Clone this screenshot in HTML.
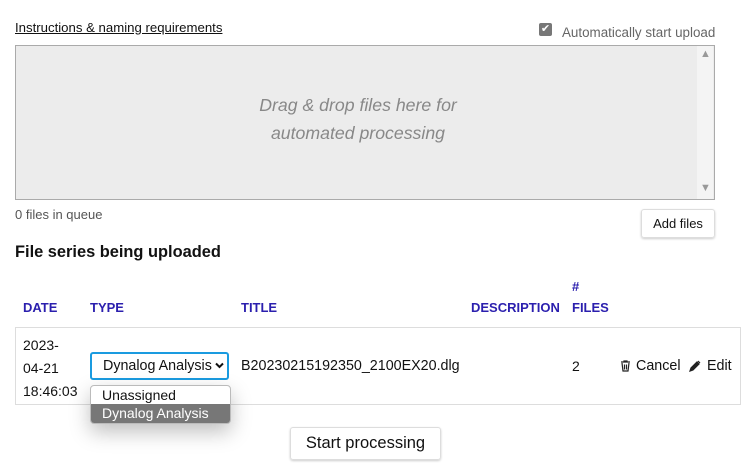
<!DOCTYPE html>
<html><head><style>
body{margin:0;width:748px;height:468px;background:#fff;font-family:"Liberation Sans",Arial,sans-serif;position:relative;overflow:hidden;color:#111}
.a{position:absolute;white-space:nowrap}
.h{color:#2b1fae;font-weight:bold;font-size:13px}
</style></head><body>
<div class="a" style="left:15px;top:20px;font-size:13.2px;text-decoration:underline">Instructions &amp; naming requirements</div>
<div class="a" style="left:539px;top:23px;width:13px;height:13px;background:#777;border-radius:2px;color:#fff;font-size:11px;line-height:13px;text-align:center">✔</div>
<div class="a" style="left:562px;top:25px;font-size:13.4px;color:#666">Automatically start upload</div>
<div class="a" style="left:15px;top:45px;width:698px;height:153px;border:1px solid #aaa;background:#ececec"></div>
<div class="a" style="left:697px;top:46px;width:16px;height:153px;background:#f4f4f4"></div>
<div class="a" style="left:700px;top:48px;font-size:11px;color:#999">▲</div>
<div class="a" style="left:700px;top:182px;font-size:11px;color:#999">▼</div>
<div class="a" style="left:180px;top:91px;width:356px;text-align:center;font-size:17.7px;font-style:italic;color:#888;line-height:28px;white-space:normal">Drag &amp; drop files here for<br>automated processing</div>
<div class="a" style="left:15px;top:207px;font-size:13px;color:#555">0 files in queue</div>
<div class="a" style="left:641px;top:209px;width:72px;height:27px;border:1px solid #ddd;border-radius:3px;box-shadow:0 1px 2px #ccc;font-size:13px;line-height:27px;text-align:center">Add files</div>
<div class="a" style="left:15px;top:243px;font-size:16.4px;font-weight:bold">File series being uploaded</div>
<div class="a h" style="left:23px;top:300px">DATE</div>
<div class="a h" style="left:90px;top:300px">TYPE</div>
<div class="a h" style="left:241px;top:300px">TITLE</div>
<div class="a h" style="left:471px;top:300px">DESCRIPTION</div>
<div class="a h" style="left:572px;top:279px">#</div>
<div class="a h" style="left:572px;top:300px">FILES</div>
<div class="a" style="left:15px;top:327px;width:724px;height:76px;border:1px solid #ddd"></div>
<div class="a" style="left:23px;top:334px;font-size:14px;line-height:23px">2023-<br>04-21<br>18:46:03</div>
<div class="a" style="left:90px;top:352px;height:24px;border:2px solid #1a9be0;border-radius:3px;font-size:14.3px;line-height:24px;padding-left:11px;width:124px">Dynalog Analysis</div>
<svg class="a" style="left:215px;top:362px" width="9" height="7" viewBox="0 0 9 7"><path d="M1 1.5l3.5 3.5 3.5-3.5" stroke="#111" stroke-width="2" fill="none"/></svg>
<div class="a" style="left:90px;top:385px;width:139px;height:37px;border:1px solid #bbb;border-radius:4px;overflow:hidden;box-shadow:0 8px 20px rgba(0,0,0,.25);font-size:14px;background:#fff">
<div style="height:18px;line-height:18px;padding-left:11px">Unassigned</div>
<div style="height:19px;line-height:19px;padding-left:11px;background:#777;color:#fff">Dynalog Analysis</div></div>
<div class="a" style="left:241px;top:358px;font-size:14.3px">B20230215192350_2100EX20.dlg</div>
<div class="a" style="left:572px;top:358px;font-size:14px">2</div>
<svg class="a" style="left:620px;top:360px" width="11" height="12" viewBox="0 0 11 12"><path d="M1 2h9M4 2V1h3v1M2 3l1 8h5l1-8M4.5 4.5v5M6.5 4.5v5" stroke="#222" fill="none" stroke-width="1.2"/></svg>
<div class="a" style="left:636px;top:358px;font-size:14.3px">Cancel</div>
<svg class="a" style="left:689px;top:360px" width="12" height="12" viewBox="0 0 12 12"><path d="M1 11l1-3 6-6 2 2-6 6zM9 1l2 2" stroke="#222" fill="#222" stroke-width="1.2"/></svg>
<div class="a" style="left:707px;top:358px;font-size:14.3px">Edit</div>
<div class="a" style="left:290px;top:427px;width:149px;height:31px;border:1px solid #ddd;border-radius:3px;box-shadow:0 1px 2px #ccc;font-size:16.5px;line-height:31px;text-align:center">Start processing</div>
</body></html>
